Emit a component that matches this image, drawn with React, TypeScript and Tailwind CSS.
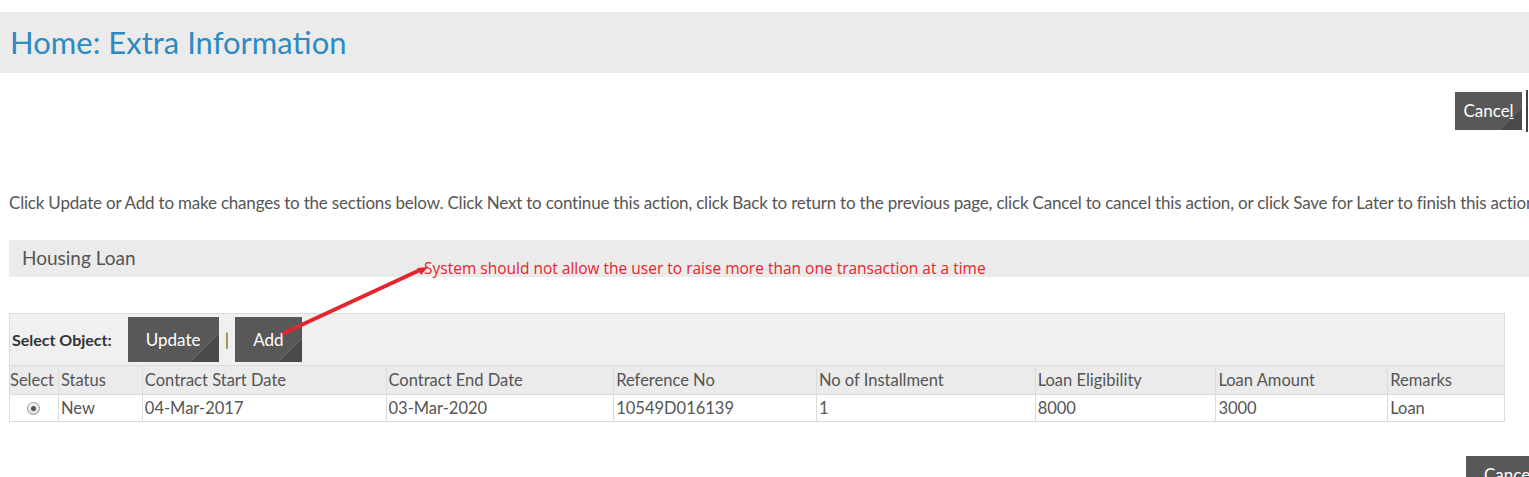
const columns = [
  { label: "Select", width: "w-[48px]" },
  { label: "Status", width: "w-[84px]" },
  { label: "Contract Start Date", width: "w-[244px]" },
  { label: "Contract End Date", width: "w-[228px]" },
  { label: "Reference No", width: "w-[203px]" },
  { label: "No of Installment", width: "w-[219px]" },
  { label: "Loan Eligibility", width: "w-[181px]" },
  { label: "Loan Amount", width: "w-[172px]" },
  { label: "Remarks", width: "w-[117px]" },
];

const row = ["New", "04-Mar-2017", "03-Mar-2020", "10549D016139", "1", "8000", "3000", "Loan"];

function DarkButton({ children, className = "" }: { children: React.ReactNode; className?: string }) {
  return (
    <button
      className={`bg-[linear-gradient(135deg,#585858_78%,#656565_78.5%,#4a4a4a_80%)] text-white ${className}`}
    >
      {children}
    </button>
  );
}

export default function App() {
  return (
    <div className="relative flex h-[477px] w-[1529px] flex-col overflow-hidden bg-white pt-[12px] font-['Lato',sans-serif] text-[#555]">
      <div className="flex h-[61px] shrink-0 items-center bg-[#ebebeb] pl-[10px]">
        <h1 className="text-[31px] text-[#2b8bc2]">Home: Extra Information</h1>
      </div>

      <div className="mt-[17px] flex h-[42px] shrink-0 items-center justify-end">
        <DarkButton className="h-[38px] w-[67px] text-[17px]">
          Cance<span className="underline">l</span>
        </DarkButton>
        <div className="ml-[4px] mr-[1px] h-[42px] w-[2px] bg-[#444]" />
      </div>

      <div className="mt-[59px] flex h-[24px] shrink-0 items-center overflow-hidden whitespace-nowrap pl-[9px] text-[17px] tracking-[-0.2px]">
        Click Update or Add to make changes to the sections below. Click Next to continue this action, click Back to return to the previous page, click Cancel to cancel this action, or click Save for Later to finish this action later.
      </div>

      <div className="ml-[9px] mt-[25px] flex h-[37px] shrink-0 items-center bg-[#ebebeb] pl-[13px] text-[19px]">
        Housing Loan
      </div>

      <div className="ml-[9px] mt-[36px] w-[1496px] shrink-0 border border-[#dcdcdc]">
        <div className="flex h-[51px] items-center bg-[#f0f0f0] pl-[2px]">
          <span className="text-[16px] font-bold text-[#333]">Select Object:</span>
          <DarkButton className="ml-[16px] h-[45px] w-[91px] text-[17px]">Update</DarkButton>
          <span className="mx-[6px] text-[17px] text-[#3c763d]">|</span>
          <DarkButton className="h-[45px] w-[67px] text-[17px]">Add</DarkButton>
        </div>
        <div className="flex h-[29px] border-t border-[#dcdcdc] bg-[#ebebeb] text-[16.5px]">
          {columns.map((c, i) => (
            <div
              key={c.label}
              className={`${c.width} flex items-center ${i > 0 ? "border-l border-[#dcdcdc] pl-[2px]" : ""}`}
            >
              {c.label}
            </div>
          ))}
        </div>
        <div className="flex h-[27px] border-t border-[#dcdcdc] bg-white text-[16.5px]">
          <div className="flex w-[48px] items-center justify-center">
            <span className="flex h-[13px] w-[13px] items-center justify-center rounded-full border border-[#9a9a9a] bg-[linear-gradient(#f4f4f4,#dcdcdc)]">
              <span className="h-[5px] w-[5px] rounded-full bg-[#555]" />
            </span>
          </div>
          {row.map((v, i) => (
            <div
              key={i}
              className={`${columns[i + 1].width} flex items-center border-l border-[#dcdcdc] pl-[2px]`}
            >
              {v}
            </div>
          ))}
        </div>
      </div>

      <div className="mt-[34px] flex shrink-0 justify-end">
        <DarkButton className="h-[38px] w-[63px] pl-[18px] text-left text-[17px]">Cancel</DarkButton>
      </div>

      <div className="absolute left-[424px] top-[256px] font-['Open_Sans',sans-serif] text-[15.5px] leading-[24px] text-[#e3262e]">
        System should not allow the user to raise more than one transaction at a time
      </div>
      <svg className="absolute left-0 top-0" width="1529" height="477" viewBox="0 0 1529 477">
        <line x1="284" y1="333" x2="420" y2="270" stroke="#e3262e" strokeWidth="4" strokeLinecap="round" />
        <polygon points="428,267 417,268 421,275" fill="#e3262e" />
      </svg>
    </div>
  );
}
